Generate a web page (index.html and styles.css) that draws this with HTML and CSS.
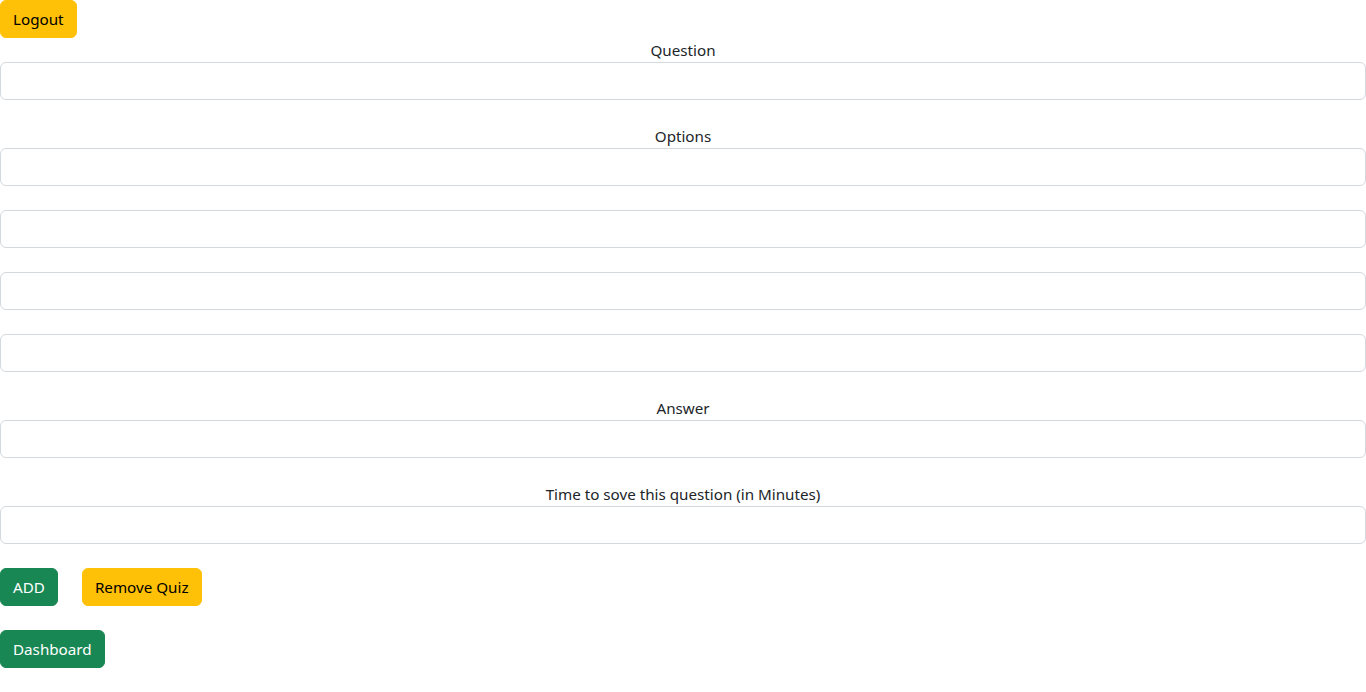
FILE: index.html
```html
<!DOCTYPE html>
<html lang="en">
<head>
<meta charset="utf-8">
<title>Add Quiz</title>
<link rel="stylesheet" href="styles.css">
</head>
<body>
<div class="page">
  <div class="top"><button class="btn btn-warning">Logout</button></div>
  <form class="quiz-form">
    <div class="field">
      <label class="label">Question</label>
      <input class="form-control" type="text">
    </div>
    <div class="field">
      <label class="label">Options</label>
      <input class="form-control" type="text">
      <input class="form-control" type="text">
      <input class="form-control" type="text">
      <input class="form-control" type="text">
    </div>
    <div class="field">
      <label class="label">Answer</label>
      <input class="form-control" type="text">
    </div>
    <div class="field">
      <label class="label">Time to sove this question (in Minutes)</label>
      <input class="form-control" type="text">
    </div>
    <div class="actions">
      <button type="button" class="btn btn-success">ADD</button>
      <button type="button" class="btn btn-warning">Remove Quiz</button>
    </div>
    <div class="actions">
      <button type="button" class="btn btn-success">Dashboard</button>
    </div>
  </form>
</div>
</body>
</html>
```

FILE: styles.css
```css
* { box-sizing: border-box; }
html, body {
  margin: 0;
  padding: 0;
  background: #fff;
}
body {
  font-family: "Segoe UI", "Noto Sans", sans-serif;
  font-size: 15.2px;
  line-height: 24px;
  color: #212529;
}
.page {
  display: flex;
  flex-direction: column;
}
.top { display: flex; }
.quiz-form {
  display: flex;
  flex-direction: column;
  gap: 24px;
}
.field {
  display: flex;
  flex-direction: column;
  gap: 24px;
}
.label {
  display: block;
  text-align: center;
  height: 24px;
  margin-bottom: -24px;
}
.form-control {
  display: block;
  width: 100%;
  height: 38px;
  padding: 6px 12px;
  font: inherit;
  color: #212529;
  background: #fff;
  border: 1px solid #d4d9de;
  border-radius: 6px;
  outline: none;
}
.actions {
  display: flex;
  gap: 24px;
}
.btn {
  display: inline-block;
  height: 38px;
  padding: 6px 12px;
  font: inherit;
  line-height: 24px;
  border: 1px solid transparent;
  border-radius: 6px;
  cursor: pointer;
}
.btn-warning {
  background: #ffc107;
  border-color: #ffc107;
  color: #000;
}
.btn-success {
  background: #198754;
  border-color: #198754;
  color: #fff;
}
```
